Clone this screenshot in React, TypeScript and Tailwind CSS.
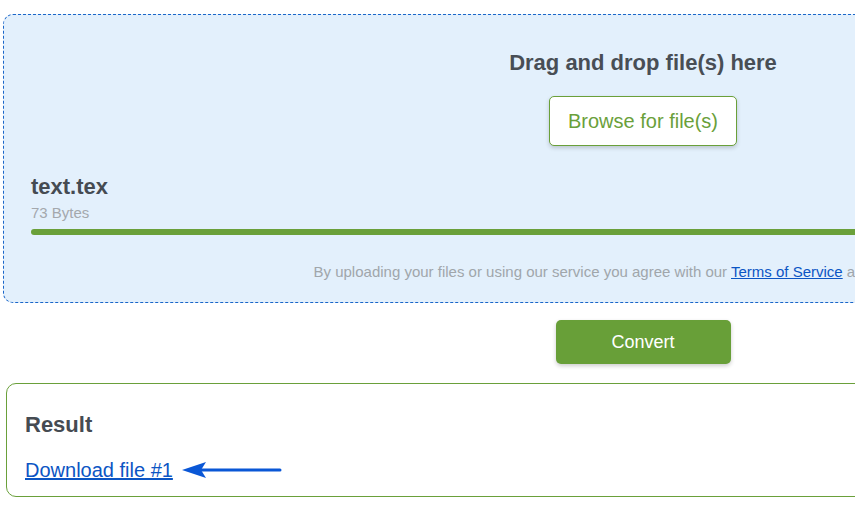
import React from "react";

export default function App() {
  return (
    <div
      className="w-full h-[507px] overflow-hidden bg-white"
      style={{ fontFamily: '"Liberation Sans", Arial, sans-serif' }}
    >
      <div className="w-[1280px] ml-[3px] pt-[14px]">
        <div className="h-[289px] rounded-[10px] border border-dashed border-[#1a66c9] bg-[#e3f0fc] flex flex-col">
          <div className="pt-[35px] text-center text-[22px] leading-[26px] font-bold text-[#484e55]">
            Drag and drop file(s) here
          </div>
          <div className="flex justify-center mt-[20px]">
            <button className="w-[188px] h-[50px] rounded-[5px] border border-[#6aa03a] bg-white text-[20px] text-[#6aa03a] shadow-[0_2px_4px_rgba(0,0,0,0.18)]">
              Browse for file(s)
            </button>
          </div>
          <div className="px-[27px] mt-[28px]">
            <div className="text-[22px] leading-[26px] font-bold text-[#454b52]">text.tex</div>
            <div className="text-[15px] leading-[18px] text-[#a4a8ad] mt-[4px]">73 Bytes</div>
            <div className="h-[6px] rounded-full bg-[#6aa03a] mt-[7px]" />
          </div>
          <div className="mt-[28px] text-center text-[15px] leading-[18px] text-[#a0a6ab]">
            By uploading your files or using our service you agree with our{" "}
            <a href="#" className="underline text-[#0b55c4]">Terms of Service</a> and{" "}
            <a href="#" className="underline text-[#0b55c4]">Privacy Policy</a>.
          </div>
        </div>
        <div className="flex justify-center mt-[17px]">
          <button className="w-[175px] h-[44px] rounded-[5px] bg-[#689f38] text-white text-[18px] shadow-[0_2px_4px_rgba(0,0,0,0.2)]">
            Convert
          </button>
        </div>
        <div className="ml-[3px] w-[1274px] mt-[19px] h-[114px] rounded-[10px] border border-[#6aa03a] px-[18px] pt-[28px]">
          <div className="text-[22px] leading-[26px] font-bold text-[#454b52]">Result</div>
          <div className="flex items-center mt-[20px]">
            <a href="#" className="text-[20px] leading-[24px] underline text-[#0b55c4]">
              Download file #1
            </a>
            <svg width="100" height="18" viewBox="0 0 100 18" className="ml-[9px]">
              <polygon points="0,9 24,1 19,9 24,17" fill="#0a57d6" />
              <line x1="18" y1="9" x2="98" y2="9" stroke="#0a57d6" strokeWidth="3" strokeLinecap="round" />
            </svg>
          </div>
        </div>
      </div>
    </div>
  );
}
